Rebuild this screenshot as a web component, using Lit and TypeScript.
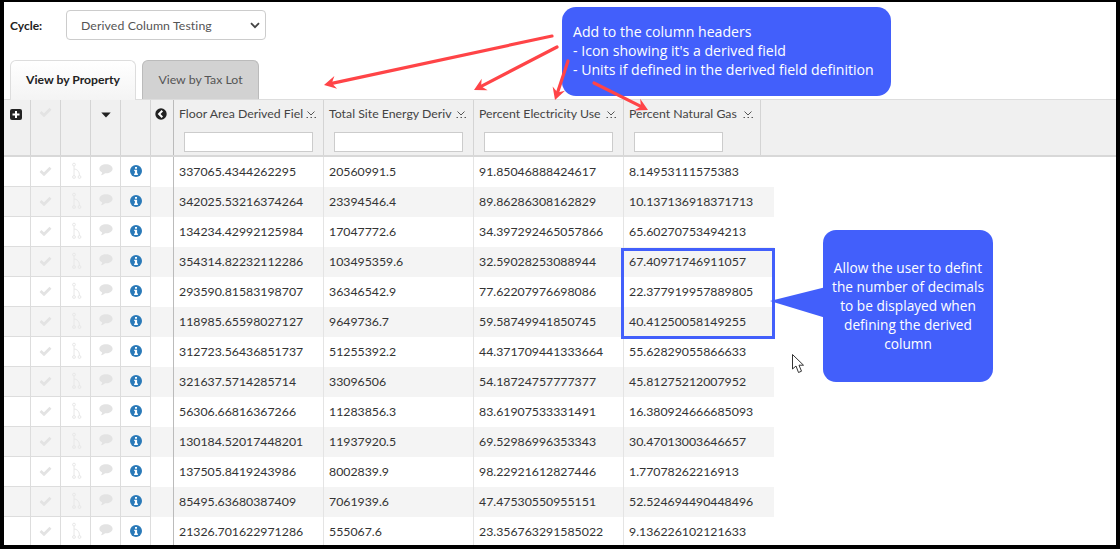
import { LitElement, html, css, svg } from "lit";
import { customElement } from "lit/decorators.js";

const ROWS: string[][] = [
  ["337065.4344262295", "20560991.5", "91.85046888424617", "8.14953111575383"],
  ["342025.53216374264", "23394546.4", "89.86286308162829", "10.137136918371713"],
  ["134234.42992125984", "17047772.6", "34.397292465057866", "65.60270753494213"],
  ["354314.82232112286", "103495359.6", "32.59028253088944", "67.40971746911057"],
  ["293590.81583198707", "36346542.9", "77.62207976698086", "22.377919957889805"],
  ["118985.65598027127", "9649736.7", "59.58749941850745", "40.41250058149255"],
  ["312723.56436851737", "51255392.2", "44.371709441333664", "55.62829055866633"],
  ["321637.5714285714", "33096506", "54.18724757777377", "45.81275212007952"],
  ["56306.66816367266", "11283856.3", "83.61907533331491", "16.380924666685093"],
  ["130184.52017448201", "11937920.5", "69.52986996353343", "30.47013003646657"],
  ["137505.8419243986", "8002839.9", "98.22921612827446", "1.77078262216913"],
  ["85495.63680387409", "7061939.6", "47.47530550955151", "52.524694490448496"],
  ["21326.701622971286", "555067.6", "23.356763291585022", "9.136226102121633"],
];

const HEADERS = ["Floor Area Derived Fiel", "Total Site Energy Deriv", "Percent Electricity Use", "Percent Natural Gas"];

const check = html`<svg class="ic" width="13" height="10" viewBox="0 0 13 10"><path d="M1.5 5 L5 8.3 L11.5 1.7" fill="none" stroke="currentColor" stroke-width="2.8"/></svg>`;
const fork = html`<svg class="ic" width="14" height="18" viewBox="0 0 14 18"><g fill="none" stroke="currentColor" stroke-width="1"><circle cx="5" cy="2.6" r="1.4"/><circle cx="5" cy="15" r="1.4"/><circle cx="10.5" cy="15" r="1.4"/><path d="M5 4 V13.6 M5 7 C8 7 10.5 9.5 10.5 13.6"/></g></svg>`;
const comment = html`<svg class="ic cm" width="14" height="12" viewBox="0 0 14 12"><path d="M7 0.3 C3.2 0.3 0.4 2.3 0.4 4.8 C0.4 6.4 1.5 7.7 3.2 8.5 C3 9.6 2.5 10.5 1.9 11.3 C3.6 11 5 10.2 6 9.3 C6.3 9.3 6.7 9.3 7 9.3 C10.8 9.3 13.6 7.3 13.6 4.8 C13.6 2.3 10.8 0.3 7 0.3 Z" fill="currentColor"/></svg>`;
const info = html`<svg class="ic" width="12" height="12" viewBox="0 0 12 12"><circle cx="6" cy="6" r="6" fill="#2a7ab9"/><path d="M5 1.9 h2 v1.8 h-2 Z M4.2 4.7 h2.9 v3.9 h0.8 v1.4 h-3.8 v-1.4 h0.8 v-2.5 h-0.7 Z" fill="#fff"/></svg>`;
const plus = html`<svg class="ic" width="12" height="11" viewBox="0 0 12 11"><rect width="12" height="11" rx="2" fill="#222"/><path d="M6 2 V9 M2.5 5.5 H9.5" stroke="#fff" stroke-width="2"/></svg>`;
const caret = html`<svg class="ic" width="10" height="6" viewBox="0 0 10 6"><path d="M0.3 0.5 H9.7 L5 5.5 Z" fill="#222"/></svg>`;
const chevLeft = html`<svg class="ic" width="12" height="12" viewBox="0 0 12 12"><circle cx="6" cy="6" r="5.7" fill="#222"/><path d="M7.3 2.8 L4.1 6 L7.3 9.2" fill="none" stroke="#fff" stroke-width="2"/></svg>`;
const sortIcon = html`<svg class="sort" width="11" height="11" viewBox="0 0 11 11"><path d="M1.5 2.5 L5 6 L8.5 2.5" fill="none" stroke="#555" stroke-width="1"/><path d="M0.5 8.5 H2 M4.5 8.5 H6 M8.5 8.5 H10" stroke="#555" stroke-width="1"/></svg>`;
const chevSelect = html`<svg class="selchev" width="10" height="7" viewBox="0 0 10 7"><path d="M1 1.2 L5 5.2 L9 1.2" fill="none" stroke="#444" stroke-width="1.8"/></svg>`;

function arrow(x1: number, y1: number, x2: number, y2: number) {
  const a = Math.atan2(y2 - y1, x2 - x1);
  const ux = Math.cos(a), uy = Math.sin(a);
  const bx = x2 - ux * 12, by = y2 - uy * 12;
  const nx = -uy, ny = ux;
  const sx = x2 - ux * 8, sy = y2 - uy * 8;
  return svg`<line x1=${x1} y1=${y1} x2=${sx} y2=${sy} stroke="#ff4447" stroke-width="3.2" stroke-linecap="round"/>
    <polygon fill="#ff4447" points="${x2},${y2} ${bx + nx * 6.5},${by + ny * 6.5} ${sx},${sy} ${bx - nx * 6.5},${by - ny * 6.5}"/>`;
}

@customElement("app-root")
export class AppRoot extends LitElement {
  static styles = css`
    :host {
      display: block; position: relative; box-sizing: border-box;
      width: 1120px; height: 549px; padding: 2px 4px 4px;
      background: #000; overflow: hidden;
      font-family: "Lato", "Noto Sans", sans-serif; font-size: 12.3px; color: #333;
    }
    .page { background: #fff; height: 100%; overflow: hidden; display: flex; flex-direction: column; }
    .cycle { display: flex; align-items: center; padding: 8px 0 0 6px; height: 30px; }
    .cycle-label { width: 56px; font-weight: 700; font-size: 12px; color: #222; }
    .select {
      box-sizing: border-box; width: 200px; height: 30px; border: 1px solid #ccc; border-radius: 4px;
      display: flex; align-items: center; justify-content: space-between; padding: 0 5px 0 14px;
      color: #555; font-size: 12.3px; letter-spacing: 0.1px;
    }
    .tabs { display: flex; gap: 6px; padding: 20px 0 0 6px; height: 39px; }
    .tab {
      box-sizing: border-box; height: 40px; border: 1px solid #ddd; border-bottom: none;
      border-radius: 6px 6px 0 0; display: flex; align-items: center; justify-content: center;
      position: relative; z-index: 1; padding-bottom: 2px;
    }
    .tab.on { width: 126px; background: linear-gradient(#fff, #f4f4f4); font-weight: 700; color: #222; font-size: 12.2px; }
    .tab.off { width: 117px; height: 39px; background: #d2d2d2; border-color: #bbb; color: #555; }
    .head {
      display: flex; height: 58px; flex: none; box-sizing: border-box; background: #f0f0f0;
      border-top: 1px solid #ddd; border-bottom: 2px solid #d8d8d8;
    }
    .hc { box-sizing: border-box; border-right: 1px solid #d4d4d4; display: flex; justify-content: center; padding-top: 8px; flex: none; }
    .hc .ic { margin-top: 1px; }
    .c1 { width: 27px; } .c2, .c3, .c4, .c5 { width: 30px; } .c6 { width: 23px; border-right-color: #bbb; }
    .hc.c1 { padding-right: 3px; }
    .hc.c2 .ic { margin-top: -1px; }
    .hc.c4 .ic { margin-top: 4px; }
    .hc.c6 { padding-right: 3px; }
    .hc.c6 .ic { margin-top: 0; }
    .hd { width: 150px; flex-direction: column; justify-content: flex-start; padding: 5px 5px 0; position: relative; }
    .hd.last { width: 137px; }
    .title { white-space: nowrap; color: #444; height: 17px; line-height: 17px; }
    .sort { position: absolute; right: 6px; top: 9px; }
    .filter { box-sizing: border-box; display: block; margin: 10px 0 0 5px; width: 129px; height: 20px; border: 1px solid #ccc; background: #fff; }
    .last .filter { width: 89px; }
    .body { flex: 1; overflow: hidden; }
    .row { display: flex; height: 30px; width: 770px; background: #fff; }
    .row.alt { background: #f4f4f4; }
    .cell { box-sizing: border-box; flex: none; display: flex; align-items: center; justify-content: center; border-right: 1px solid #ddd; border-bottom: 1px solid #ddd; padding-bottom: 1px; }
    .cell.c6 { border-bottom: none; border-right-color: #bbb; }
    .light { color: #e3e3e3; }
    .fork { color: #e8e8e8; }
    .cm { margin-bottom: 2px; }
    .d { box-sizing: border-box; width: 150px; flex: none; padding: 0 0 1px 5px; display: flex; align-items: center; border-right: 1px solid #e4e4e4; }
    .d.last { border-right: none; }
    .overlay { position: absolute; left: 0; top: 0; pointer-events: none; }
    .note { position: absolute; box-sizing: border-box; background: #425ffb; color: #fff; font-family: "Open Sans", "Noto Sans", sans-serif; line-height: 19px; }
    .n1 { left: 562px; top: 7px; width: 329px; height: 89px; border-radius: 14px; padding: 15px 0 0 11px; font-size: 14.1px; }
    .n2 { left: 823px; top: 230px; width: 170px; height: 152px; border-radius: 13px; padding: 28px 0 0; text-align: center; font-size: 13.7px; }
    .mark { position: absolute; left: 621px; top: 248px; width: 154px; height: 91px; box-sizing: border-box; border: 3px solid #425ffb; }
  `;

  render() {
    return html`
      <div class="page">
        <div class="cycle">
          <span class="cycle-label">Cycle:</span>
          <div class="select"><span>Derived Column Testing</span>${chevSelect}</div>
        </div>
        <div class="tabs">
          <div class="tab on">View by Property</div>
          <div class="tab off">View by Tax Lot</div>
        </div>
        <div class="head">
          <div class="hc c1">${plus}</div>
          <div class="hc c2 light">${check}</div>
          <div class="hc c3"></div>
          <div class="hc c4">${caret}</div>
          <div class="hc c5"></div>
          <div class="hc c6">${chevLeft}</div>
          ${HEADERS.map((h, i) => html`
            <div class="hc hd ${i === 3 ? "last" : ""}">
              <div class="title">${h}</div>${sortIcon}
              <div class="filter"></div>
            </div>`)}
        </div>
        <div class="body">
          ${ROWS.map((r, i) => html`
            <div class="row ${i % 2 ? "alt" : ""}">
              <div class="cell c1"></div>
              <div class="cell c2 light">${check}</div>
              <div class="cell c3 fork">${fork}</div>
              <div class="cell c4 light">${comment}</div>
              <div class="cell c5">${info}</div>
              <div class="cell c6"></div>
              ${r.map((v, j) => html`<div class="d ${j === 3 ? "last" : ""}">${v}</div>`)}
            </div>`)}
        </div>
      </div>
      <div class="mark"></div>
      <div class="note n1">Add to the column headers<br>- Icon showing it's a derived field<br>- Units if defined in the derived field definition</div>
      <div class="note n2">Allow the user to defint<br>the number of decimals<br>to be displayed when<br>defining the derived<br>column</div>
      <svg class="overlay" width="1120" height="549" viewBox="0 0 1120 549">
        ${arrow(552, 36, 324, 85)}
        ${arrow(557, 47, 474, 90)}
        ${arrow(568, 61, 555, 100)}
        ${arrow(594, 83, 648, 110)}
        <polygon points="770,301 826,287 826,318" fill="#425ffb"/>
        <path d="M792.5 354.5 V369 L796 366 L798.5 372.5 L801.5 371.2 L799 365.2 H803.5 Z" fill="#fff" stroke="#333" stroke-width="1"/>
      </svg>
    `;
  }
}
